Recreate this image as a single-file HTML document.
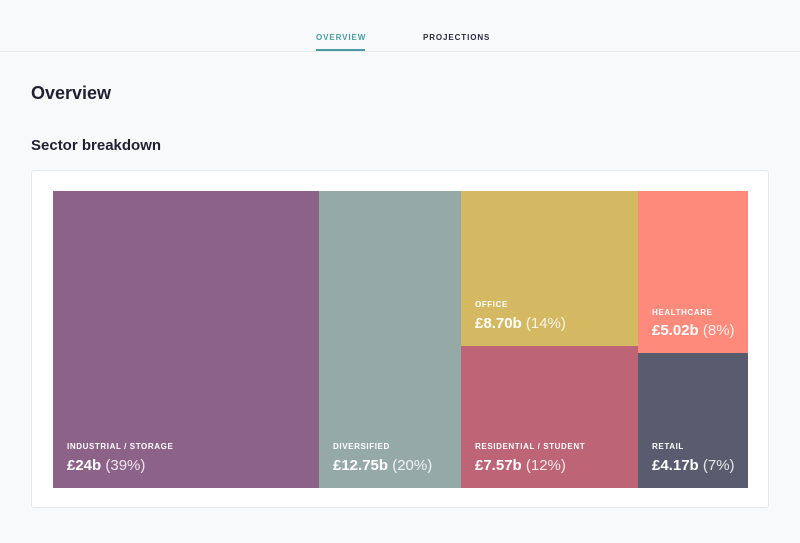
<!DOCTYPE html><html><head><style>
*{margin:0;padding:0;box-sizing:border-box}
body{width:800px;height:543px;background:#f8f9fa;font-family:"Liberation Sans",sans-serif;position:relative;overflow:hidden}
.hdr{position:absolute;left:0;top:0;width:800px;height:52px;border-bottom:1px solid #e8eaec}
.tab{position:absolute;top:33px;font-size:8px;font-weight:bold;letter-spacing:0.9px;color:#2a2c3e}
h1{position:absolute;left:31px;top:83px;font-size:18px;color:#1f2131}
h2{position:absolute;left:31px;top:137px;font-size:15px;color:#1f2131}
.card{position:absolute;left:31px;top:170px;width:738px;height:338px;background:#fff;border:1px solid #e6e8ea;border-radius:3px}
.b{position:absolute;color:#fff}
.b .l{position:absolute;left:14px;font-size:8px;font-weight:bold;letter-spacing:0.6px}
.b .v{position:absolute;left:14px;font-size:15px;white-space:nowrap}
.b .v b{font-weight:bold}
.b .v span{opacity:.85}
</style></head><body>
<div class="hdr">
<div class="tab" style="left:316px;color:#4a9ea3">OVERVIEW</div>
<div style="position:absolute;left:316px;top:49px;width:49px;height:2px;background:#4a9ea3"></div>
<div class="tab" style="left:423px">PROJECTIONS</div>
</div>
<h1>Overview</h1>
<h2>Sector breakdown</h2>
<div class="card"></div>
<div class="b" style="left:53px;top:191px;width:266px;height:297px;background:#8c6289"><div class="l" style="top:251px">INDUSTRIAL / STORAGE</div><div class="v" style="top:266px"><b>£24b</b> <span>(39%)</span></div></div>
<div class="b" style="left:319px;top:191px;width:142px;height:297px;background:#95aaa7"><div class="l" style="top:251px">DIVERSIFIED</div><div class="v" style="top:266px"><b>£12.75b</b> <span>(20%)</span></div></div>
<div class="b" style="left:461px;top:191px;width:177px;height:155px;background:#d4b962"><div class="l" style="top:109px">OFFICE</div><div class="v" style="top:124px"><b>£8.70b</b> <span>(14%)</span></div></div>
<div class="b" style="left:461px;top:346px;width:177px;height:142px;background:#bd6476"><div class="l" style="top:96px">RESIDENTIAL / STUDENT</div><div class="v" style="top:111px"><b>£7.57b</b> <span>(12%)</span></div></div>
<div class="b" style="left:638px;top:191px;width:110px;height:162px;background:#fd8a7b"><div class="l" style="top:117px">HEALTHCARE</div><div class="v" style="top:131px"><b>£5.02b</b> <span>(8%)</span></div></div>
<div class="b" style="left:638px;top:353px;width:110px;height:135px;background:#585c6e"><div class="l" style="top:89px">RETAIL</div><div class="v" style="top:104px"><b>£4.17b</b> <span>(7%)</span></div></div>
</body></html>
